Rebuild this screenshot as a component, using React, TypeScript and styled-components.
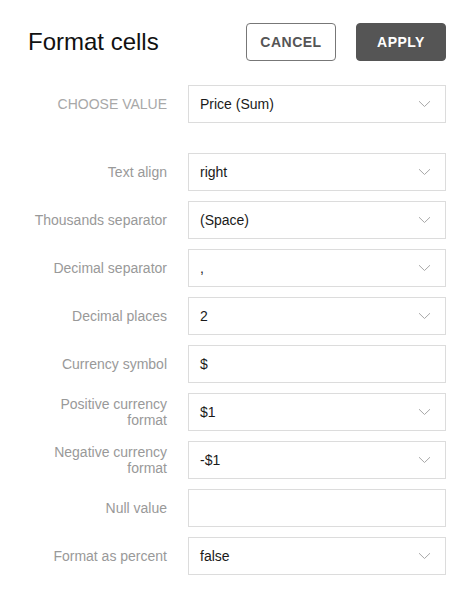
import { Fragment } from "react";
import styled, { createGlobalStyle } from "styled-components";

const GlobalStyle = createGlobalStyle`
  body {
    margin: 0;
    background: #fff;
    font-family: "Liberation Sans", Arial, sans-serif;
  }
`;

const Panel = styled.div`
  width: 474px;
  padding: 23px 28px 20px 28px;
  box-sizing: border-box;
`;

const Header = styled.div`
  display: flex;
  align-items: center;
  justify-content: space-between;
  height: 38px;
`;

const Title = styled.h1`
  margin: 0;
  font-size: 24px;
  font-weight: 400;
  color: #111;
`;

const Actions = styled.div`
  display: flex;
  gap: 20px;
`;

const Button = styled.button<{ $primary?: boolean }>`
  width: 90px;
  height: 38px;
  box-sizing: border-box;
  border-radius: 4px;
  border: 1px solid ${(p) => (p.$primary ? "#555" : "#777")};
  background: ${(p) => (p.$primary ? "#555" : "#fff")};
  color: ${(p) => (p.$primary ? "#fff" : "#555")};
  font-family: inherit;
  font-size: 14px;
  font-weight: 700;
  letter-spacing: 0.5px;
  cursor: pointer;
`;

const Form = styled.div`
  display: grid;
  grid-template-columns: 139px 258px;
  column-gap: 21px;
  row-gap: 10px;
  margin-top: 24px;
`;

const Label = styled.label<{ $caps?: boolean }>`
  display: flex;
  align-items: center;
  justify-content: flex-end;
  text-align: right;
  font-size: 14px;
  line-height: 16px;
  color: ${(p) => (p.$caps ? "#a8a8a8" : "#999")};
  text-transform: ${(p) => (p.$caps ? "uppercase" : "none")};
`;

const Field = styled.div`
  display: flex;
  align-items: center;
  height: 38px;
  box-sizing: border-box;
  border: 1px solid #dcdcdc;
  padding: 0 14px 0 11px;
  font-size: 14px;
  color: #1a1a1a;
`;

const Value = styled.span`
  flex: 1;
`;

const Spacer = styled.div`
  grid-column: 1 / span 2;
  height: 10px;
`;

const Chevron = () => (
  <svg width="13" height="8" viewBox="0 0 13 8" fill="none">
    <path d="M1 1.2 6.5 6.5 12 1.2" stroke="#a8a8a8" strokeWidth="1" />
  </svg>
);

type Row = { label: string; value: string; select: boolean };

const rows: Row[] = [
  { label: "Text align", value: "right", select: true },
  { label: "Thousands separator", value: "(Space)", select: true },
  { label: "Decimal separator", value: ",", select: true },
  { label: "Decimal places", value: "2", select: true },
  { label: "Currency symbol", value: "$", select: false },
  { label: "Positive currency format", value: "$1", select: true },
  { label: "Negative currency format", value: "-$1", select: true },
  { label: "Null value", value: "", select: false },
  { label: "Format as percent", value: "false", select: true },
];

export default function App() {
  return (
    <>
      <GlobalStyle />
      <Panel>
        <Header>
          <Title>Format cells</Title>
          <Actions>
            <Button>CANCEL</Button>
            <Button $primary>APPLY</Button>
          </Actions>
        </Header>
        <Form>
          <Label $caps>Choose value</Label>
          <Field>
            <Value>Price (Sum)</Value>
            <Chevron />
          </Field>
          <Spacer />
          {rows.map((r) => (
            <Fragment key={r.label}>
              <Label>{r.label}</Label>
              <Field>
                <Value>{r.value}</Value>
                {r.select && <Chevron />}
              </Field>
            </Fragment>
          ))}
        </Form>
      </Panel>
    </>
  );
}
